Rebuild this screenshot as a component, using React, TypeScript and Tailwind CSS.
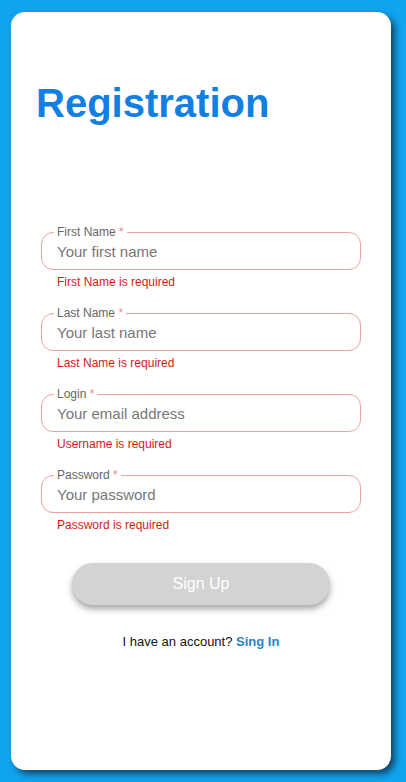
import React from 'react'

const fields = [
    { label: 'First Name', placeholder: 'Your first name', error: 'First Name is required', type: 'text' },
    { label: 'Last Name', placeholder: 'Your last name', error: 'Last Name is required', type: 'text' },
    { label: 'Login', placeholder: 'Your email address', error: 'Username is required', type: 'email' },
    { label: 'Password', placeholder: 'Your password', error: 'Password is required', type: 'password' },
]

const App = () => {
    return (
        <div
            className="min-h-[782px] w-full bg-[#10a3ee] pt-[12px] pb-[12px] pl-[11px] pr-[15px]"
            style={{ fontFamily: '"Liberation Sans", Arial, sans-serif' }}
        >
            <div className="h-[758px] w-[380px] rounded-[14px] bg-white shadow-[4px_4px_6px_rgba(20,40,60,0.75)] pt-[68px]">
                {/* Header */}
                <h1 className="pl-[25px] text-[40px] leading-[46px] font-bold text-[#1380e1]">Registration</h1>

                {/* Form */}
                <form className="mt-[99px] px-[30px]" onSubmit={(e) => e.preventDefault()}>
                    {fields.map((f) => (
                        <div key={f.label} className="mb-[17px]">
                            <fieldset className="rounded-[12px] border border-[#eba3a3] px-[12px] pb-[6px]">
                                <legend className="px-[3px] text-[12px] leading-[14px] text-[#666666]">
                                    {f.label} <span className="text-[#ee8a8a]">*</span>
                                </legend>
                                <input
                                    type={f.type}
                                    placeholder={f.placeholder}
                                    className="block h-[24px] w-full pl-[3px] text-[15px] text-[#333] outline-none placeholder:text-[#777777]"
                                />
                            </fieldset>
                            <p className="mt-[5px] pl-[16px] text-[12px] leading-[14px] text-[#d81818]">{f.error}</p>
                        </div>
                    ))}

                    {/* Button */}
                    <div className="flex justify-center pt-[14px]">
                        <button
                            type="submit"
                            disabled
                            className="h-[42px] w-[258px] rounded-full bg-[#d3d3d3] text-[16px] text-white shadow-[0_4px_6px_rgba(0,0,0,0.35)]"
                        >
                            Sign Up
                        </button>
                    </div>

                    <p className="mt-[29px] text-center text-[13px] leading-[16px] text-[#111]">
                        I have an account? <a href="#" className="font-bold text-[#1f86cc]">Sing In</a>
                    </p>
                </form>
            </div>
        </div>
    )
}

export default App
